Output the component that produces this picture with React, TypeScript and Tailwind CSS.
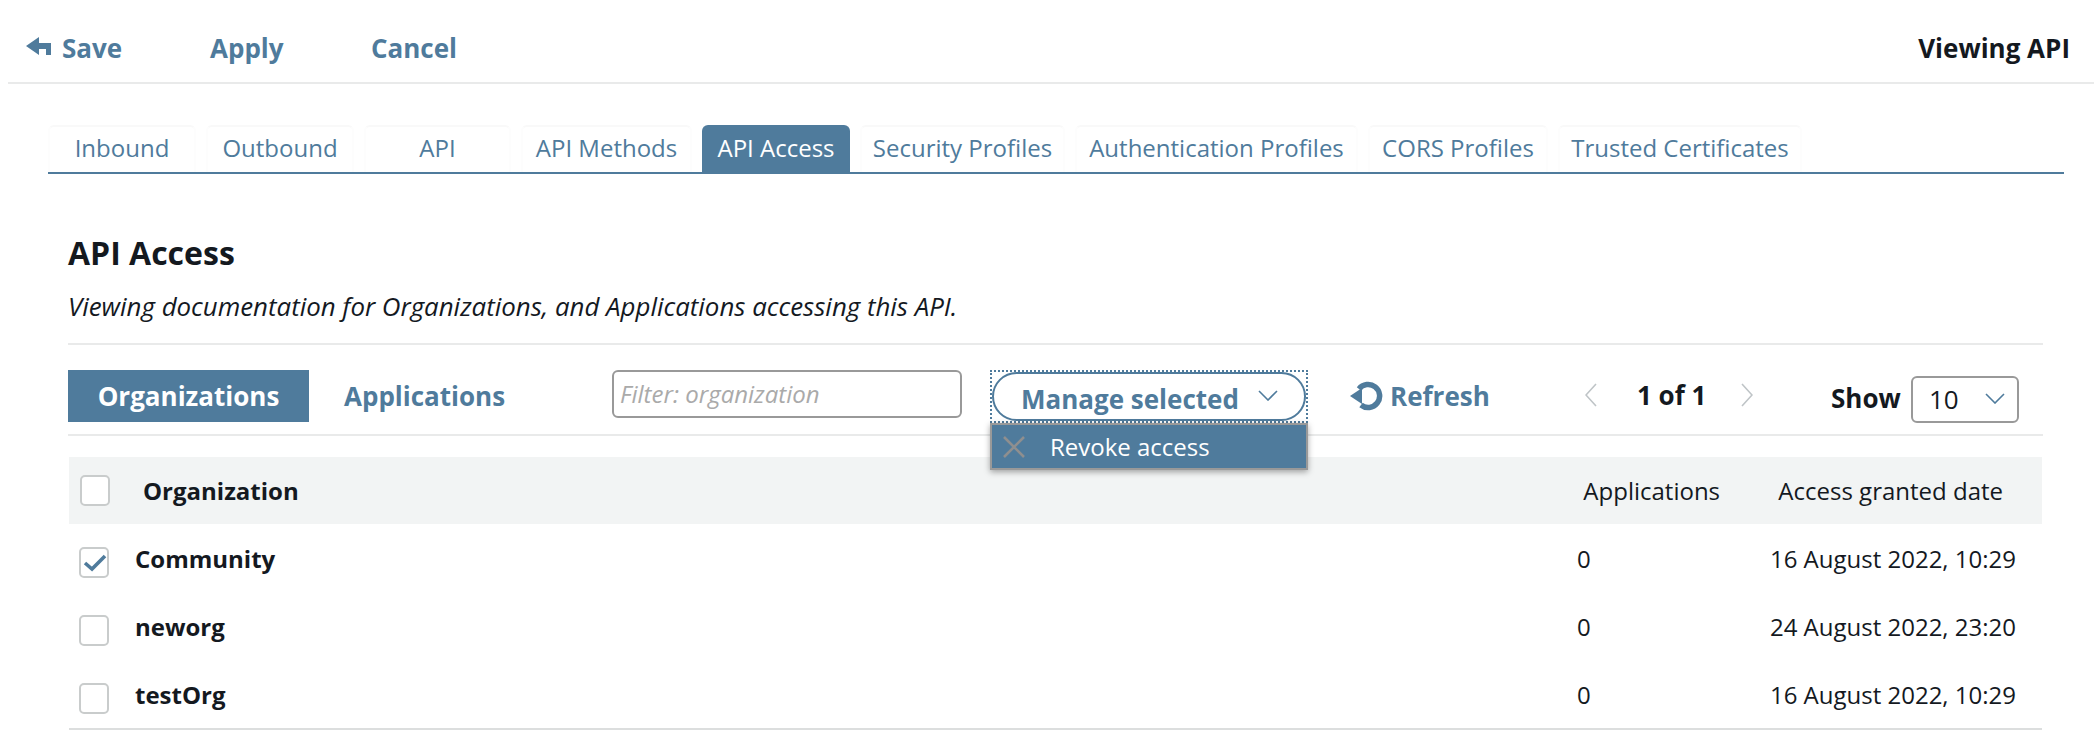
const blue = '#4f7b9c';

const tabs = [
  { label: 'Inbound', width: 'w-[148px]' },
  { label: 'Outbound', width: 'w-[148px]' },
  { label: 'API', width: 'w-[147px]' },
  { label: 'API Methods', width: 'w-[171px]' },
  { label: 'API Access', width: 'w-[148px]', active: true },
  { label: 'Security Profiles', width: 'w-[205px]' },
  { label: 'Authentication Profiles', width: 'w-[283px]' },
  { label: 'CORS Profiles', width: 'w-[180px]' },
  { label: 'Trusted Certificates', width: 'w-[244px]' },
];

const rows = [
  { name: 'Community', apps: 0, date: '16 August 2022, 10:29', checked: true },
  { name: 'neworg', apps: 0, date: '24 August 2022, 23:20' },
  { name: 'testOrg', apps: 0, date: '16 August 2022, 10:29' },
];

function Chevron({ className, dir = 'down' }: { className?: string; dir?: 'down' | 'left' | 'right' }) {
  const d = dir === 'down' ? 'M1 1 L10 10 L19 1' : dir === 'left' ? 'M11 1 L1 12 L11 23' : 'M1 1 L11 12 L1 23';
  const box = dir === 'down' ? '0 0 20 11' : '0 0 12 24';
  return (
    <svg viewBox={box} className={className} fill="none" stroke="currentColor" strokeWidth="1.6">
      <path d={d} />
    </svg>
  );
}

function Checkbox({ checked, className }: { checked?: boolean; className?: string }) {
  return (
    <span className={`relative block rounded-[5px] border-2 border-[#c9cccc] bg-white ${className}`}>
      {checked && (
        <svg viewBox="0 0 26 27" className="absolute left-0 top-0 w-[26px] h-[27px]" fill="none" stroke={blue} strokeWidth="3.6">
          <path d="M4 14 L11 20 L24 7" />
        </svg>
      )}
    </span>
  );
}

export default function App() {
  return (
    <div className="w-[2094px] h-[742px] overflow-hidden bg-white text-[#14191f] font-['Open_Sans',sans-serif] text-[24px]">
      <div className="ml-2 h-[84px] border-b-2 border-[#e9eaea] flex items-center text-[26px] font-bold text-[#4f7b9c] pt-[15px]">
        <svg viewBox="0 0 25 18" className="ml-[18px] w-[25px] h-[18px] mb-[5px]" fill={blue}>
          <path d="M0 9 L13 0 L13 6 L25 6 L25 18 L20 18 L20 12 L13 12 L13 18 Z" />
        </svg>
        <span className="ml-[11px] w-[148px]">Save</span>
        <span className="w-[161px]">Apply</span>
        <span>Cancel</span>
        <span className="ml-auto mr-[24px] text-[#14191f]">Viewing API</span>
      </div>

      <div className="mt-[41px] ml-12 mr-[30px] h-[49px] flex gap-[10px] border-b-2 border-[#4f7b9c]">
        {tabs.map((t) => (
          <div
            key={t.label}
            className={`${t.width} h-[47px] flex items-center justify-center rounded-t-[6px] ${
              t.active
                ? 'bg-[#4f7b9c] text-white pb-[2px]'
                : 'text-[#4f7b9c] pb-[4px] border-t-2 border-x-2 border-t-[#f9f9f9] border-x-[#fdfdfd]'
            }`}
          >
            {t.label}
          </div>
        ))}
      </div>

      <div className="ml-[68px] mr-[51px]">
        <h2 className="mt-[58px] h-[41px] text-[32px] leading-[41px] font-bold">API Access</h2>
        <p className="mt-[16px] h-[34px] italic text-[25.85px] leading-[34px]">
          Viewing documentation for Organizations, and Applications accessing this API.
        </p>
        <div className="mt-[20px] h-[93px] border-y-2 border-[#e9eaea] flex text-[26px] font-bold relative">
          <div className="mt-[25px] w-[241px] h-[52px] bg-[#4f7b9c] text-white flex items-center justify-center">
            Organizations
          </div>
          <div className="ml-[35px] mt-[25px] w-[268px] h-[52px] flex items-center text-[#4f7b9c]">Applications</div>
          <div className="mt-[25px] w-[350px] h-[48px] rounded-[6px] border-2 border-[#999] px-[6px] flex items-center font-normal italic text-[24px] text-[#aaa]">
            Filter: organization
          </div>
          <div className="ml-[28px] mt-[25px] w-[318px] relative">
            <div className="h-[53px] border-dotted border-2 border-[#4f7b9c]">
              <div className="h-full rounded-[27px] border-2 border-[#4f7b9c] bg-white flex items-center text-[#4f7b9c] pl-[27px] pt-[6px]">
                <span className="w-[237px]">Manage selected</span>
                <Chevron className="mb-[8px] w-[20px] h-[11px]" />
              </div>
            </div>
            <div className="absolute left-0 top-[53px] w-[318px] h-[47px] bg-[#4f7b9c] border-2 border-[#999] shadow-[0_2px_6px_rgba(0,0,0,0.35)] flex items-center text-[24px] font-normal text-white z-10">
              <svg viewBox="0 0 22 22" className="ml-[11px] w-[22px] h-[22px]" fill="none" stroke="#8f8f8f" strokeWidth="2.6">
                <path d="M1 1 L21 21 M21 1 L1 21" />
              </svg>
              <span className="ml-[25px]">Revoke access</span>
            </div>
          </div>
          <div className="ml-[42px] mt-[25px] w-[235px] h-[52px] flex items-center text-[#4f7b9c]">
            <svg viewBox="0 0 33 32" className="w-[33px] h-[32px]" fill="none" stroke={blue} strokeWidth="5.5">
              <path d="M9 9 A11.5 11.5 0 1 1 11 25" />
              <path d="M0 16 L12 8 L12 24 Z" fill={blue} stroke="none" />
            </svg>
            <span className="ml-[7px]">Refresh</span>
          </div>
          <div className="mt-[25px] h-[50px] flex items-center text-[#14191f]">
            <Chevron dir="left" className="w-[12px] h-[24px] text-[#bfc4c7]" />
            <span className="ml-[40px] w-[66px] whitespace-nowrap">1 of 1</span>
            <Chevron dir="right" className="ml-[38px] w-[12px] h-[24px] text-[#bfc4c7]" />
          </div>
          <div className="ml-[78px] mt-[31px] h-[48px] flex items-start text-[#14191f]">
            <span className="w-[69px] leading-[44px]">Show</span>
            <div className="ml-[11px] w-[108px] h-[47px] rounded-[6px] border-2 border-[#999] font-normal text-[26px] flex items-center pl-[16px]">
              <span className="w-[56px]">10</span>
              <Chevron className="mb-[2px] w-[20px] h-[11px] text-[#4f7b9c]" />
            </div>
          </div>
        </div>

        <div className="mt-[21px] h-[67px] bg-[#f2f4f4] flex items-center ml-px mr-px">
          <Checkbox className="ml-[11px] w-[30px] h-[31px]" />
          <span className="ml-[33px] font-bold">Organization</span>
          <span className="ml-auto w-[195px]">Applications</span>
          <span className="mr-[39px]">Access granted date</span>
        </div>

        <div className="border-b-2 border-[#dcdede] ml-px mr-px">
          {rows.map((r) => (
            <div key={r.name} className="h-[68px] pt-[2px] flex items-center">
              <Checkbox checked={r.checked} className="ml-[10px] mt-[6px] w-[30px] h-[31px]" />
              <span className="ml-[26px] font-bold">{r.name}</span>
              <span className="ml-auto w-[193px]">{r.apps}</span>
              <span className="mr-[26px]">{r.date}</span>
            </div>
          ))}
        </div>
      </div>
    </div>
  );
}
